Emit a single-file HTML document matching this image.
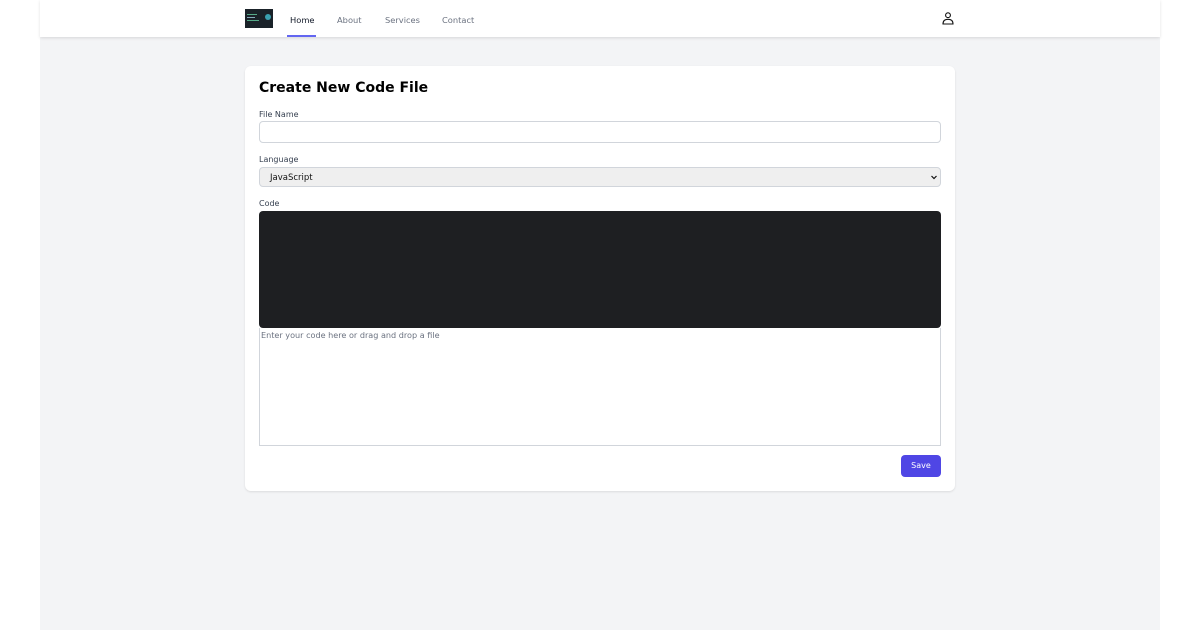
<!DOCTYPE html>
<html><head><meta charset="utf-8"><style>
*{box-sizing:border-box;margin:0;padding:0}
body{width:1200px;height:630px;background:#fff;font-family:"DejaVu Sans","Liberation Sans",sans-serif;position:relative;overflow:hidden}
.gray{position:absolute;left:40px;top:37px;width:1120px;height:593px;background:#f3f4f6}
.hdr{position:absolute;left:40px;top:0;width:1120px;height:37px;background:#fff;box-shadow:0 1px 3px rgba(0,0,0,.12)}
.logo{position:absolute;left:245px;top:9px;width:28px;height:19px;background:#1a2229}
.nav{position:absolute;top:15px;font-size:8.3px;color:#6b7280}
.nav.a{color:#111827}
.ul{position:absolute;left:287px;top:35px;width:29px;height:2px;background:#6366f1}
.card{position:absolute;left:245px;top:66px;width:710px;height:425px;background:#fff;border-radius:6px;box-shadow:0 1px 2px rgba(0,0,0,.1)}
h1{position:absolute;left:259px;top:80px;font-size:14px;font-weight:bold;color:#000}
.lbl{position:absolute;left:259px;font-size:8px;color:#374151}
.inp{position:absolute;left:259px;width:682px;border:1px solid #d1d5db;border-radius:4px;background:#fff}
.sel{background:#efefef;font-size:8.5px;color:#111;padding:5px 0 0 10px}
.code{position:absolute;left:259px;top:211px;width:682px;height:117px;background:#1e1f22;border-radius:4px}
.ta{position:absolute;left:259px;top:328px;width:682px;height:118px;border:1px solid #d1d5db;border-top:none;font-size:8.1px;color:#6b7280;padding:2px 0 0 1px}
.btn{position:absolute;left:901px;top:455px;width:40px;height:22px;background:#4f46e5;border-radius:4px;color:#fff;font-size:8px;text-align:center;line-height:22px}
</style></head><body>
<div class="gray"></div>
<div class="hdr"></div>
<div class="logo"><svg width="28" height="19"><rect x="2" y="5" width="10" height="1" fill="#5a8"/><rect x="2" y="8" width="8" height="1" fill="#8ab"/><rect x="2" y="11" width="12" height="1" fill="#5a8"/><circle cx="23" cy="8" r="3" fill="#3aa0b0"/></svg></div>
<div class="nav a" style="left:290px">Home</div>
<div class="nav" style="left:337px">About</div>
<div class="nav" style="left:385px">Services</div>
<div class="nav" style="left:442px">Contact</div>
<div class="ul"></div>
<svg style="position:absolute;left:941px;top:11px" width="14" height="14" viewBox="0 0 14 14" fill="none" stroke="#111" stroke-width="1.1"><circle cx="7" cy="4.2" r="2.4"/><path d="M2 13 C2 9.5 4 8.3 7 8.3 C10 8.3 12 9.5 12 13 Z"/></svg>
<div class="card"></div>
<h1>Create New Code File</h1>
<div class="lbl" style="top:110px">File Name</div>
<div class="inp" style="top:121px;height:22px"></div>
<div class="lbl" style="top:155px">Language</div>
<div class="inp sel" style="top:167px;height:20px">JavaScript<svg style="position:absolute;right:3px;top:7px" width="6" height="5" viewBox="0 0 6 5"><path d="M0.5 1 L3 3.5 L5.5 1" stroke="#111" stroke-width="1.2" fill="none"/></svg></div>
<div class="lbl" style="top:199px">Code</div>
<div class="code"></div>
<div class="ta">Enter your code here or drag and drop a file</div>
<div class="btn">Save</div>
</body></html>
